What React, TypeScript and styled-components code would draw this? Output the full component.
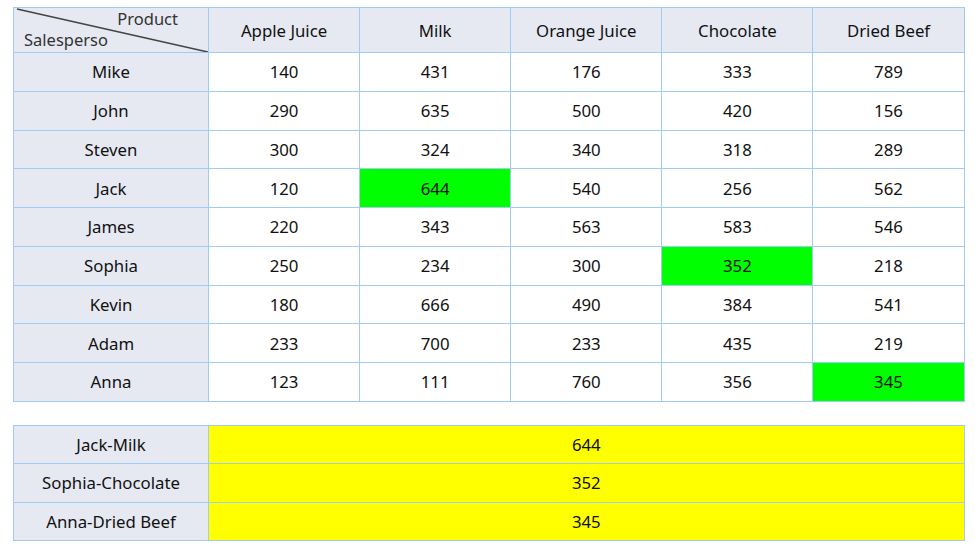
import React from "react";
import styled, { createGlobalStyle } from "styled-components";

const Global = createGlobalStyle`
  html, body { margin: 0; padding: 0; background: #ffffff; }
  body { font-family: "Noto Sans", "Open Sans", sans-serif; color: #111; }
`;

const Page = styled.div`
  padding: 7px 0 0 13px;
  display: flex;
  flex-direction: column;
  gap: 23px;
  width: 952px;
`;

const Table = styled.table`
  border-collapse: collapse;
  table-layout: fixed;
  width: 951.6px;
  font-size: 16.8px;
`;

const Col = styled.col<{ $w?: number }>`
  width: ${(p) => (p.$w ? `${p.$w}px` : "auto")};
`;

const Cell = styled.td<{ $bg?: string; $head?: boolean; $h?: number }>`
  border: 1px solid #9fcbf5;
  background: ${(p) => p.$bg || (p.$head ? "#e6e9f1" : "#ffffff")};
  text-align: center;
  vertical-align: middle;
  padding: 0;
  height: ${(p) => p.$h ?? 37.75}px;
  color: #111;
  white-space: nowrap;
  overflow: hidden;
`;

const HeadCell = styled.th`
  border: 1px solid #9fcbf5;
  background: #e6e9f1;
  text-align: center;
  vertical-align: middle;
  padding: 0;
  height: 44px;
  font-weight: 400;
  color: #111;
  white-space: nowrap;
`;

const Corner = styled.th`
  border: 1px solid #9fcbf5;
  background: #e6e9f1;
  padding: 0;
  height: 44px;
  font-weight: 400;
`;

const CornerInner = styled.div`
  position: relative;
  height: 44px;
  display: flex;
  flex-direction: column;
  justify-content: space-between;
  padding: 1px 30px 3px 10px;
  box-sizing: border-box;
  font-size: 16.5px;
  color: #333;
`;

const Diagonal = styled.svg`
  position: absolute;
  inset: 0;
  width: 100%;
  height: 100%;
`;

const TopLabel = styled.span`
  align-self: flex-end;
  line-height: 19px;
`;

const BottomLabel = styled.span`
  align-self: flex-start;
  line-height: 19px;
`;

const products = ["Apple Juice", "Milk", "Orange Juice", "Chocolate", "Dried Beef"];

const rows: [string, number[]][] = [
  ["Mike", [140, 431, 176, 333, 789]],
  ["John", [290, 635, 500, 420, 156]],
  ["Steven", [300, 324, 340, 318, 289]],
  ["Jack", [120, 644, 540, 256, 562]],
  ["James", [220, 343, 563, 583, 546]],
  ["Sophia", [250, 234, 300, 352, 218]],
  ["Kevin", [180, 666, 490, 384, 541]],
  ["Adam", [233, 700, 233, 435, 219]],
  ["Anna", [123, 111, 760, 356, 345]],
];

const highlights: Record<string, number> = { Jack: 1, Sophia: 3, Anna: 4 };

const summary: [string, number][] = [
  ["Jack-Milk", 644],
  ["Sophia-Chocolate", 352],
  ["Anna-Dried Beef", 345],
];

export default function App() {
  return (
    <>
      <Global />
      <Page>
        <Table>
          <colgroup>
            <Col $w={195} />
            {products.map((p) => (
              <Col key={p} />
            ))}
          </colgroup>
          <thead>
            <tr>
              <Corner>
                <CornerInner>
                  <Diagonal viewBox="0 0 194 44" preserveAspectRatio="none">
                    <line x1="3" y1="1" x2="194" y2="44" stroke="#444" strokeWidth="1.6" />
                  </Diagonal>
                  <TopLabel>Product</TopLabel>
                  <BottomLabel>Salesperso</BottomLabel>
                </CornerInner>
              </Corner>
              {products.map((p) => (
                <HeadCell key={p}>{p}</HeadCell>
              ))}
            </tr>
          </thead>
          <tbody>
            {rows.map(([name, vals]) => (
              <tr key={name}>
                <Cell $head>{name}</Cell>
                {vals.map((v, i) => (
                  <Cell key={i} $bg={highlights[name] === i ? "#00ff00" : undefined}>
                    {v}
                  </Cell>
                ))}
              </tr>
            ))}
          </tbody>
        </Table>
        <Table>
          <colgroup>
            <Col $w={195} />
            <Col />
          </colgroup>
          <tbody>
            {summary.map(([label, v]) => (
              <tr key={label}>
                <Cell $head $h={37.4}>{label}</Cell>
                <Cell $bg="#ffff00" $h={37.4}>{v}</Cell>
              </tr>
            ))}
          </tbody>
        </Table>
      </Page>
    </>
  );
}
